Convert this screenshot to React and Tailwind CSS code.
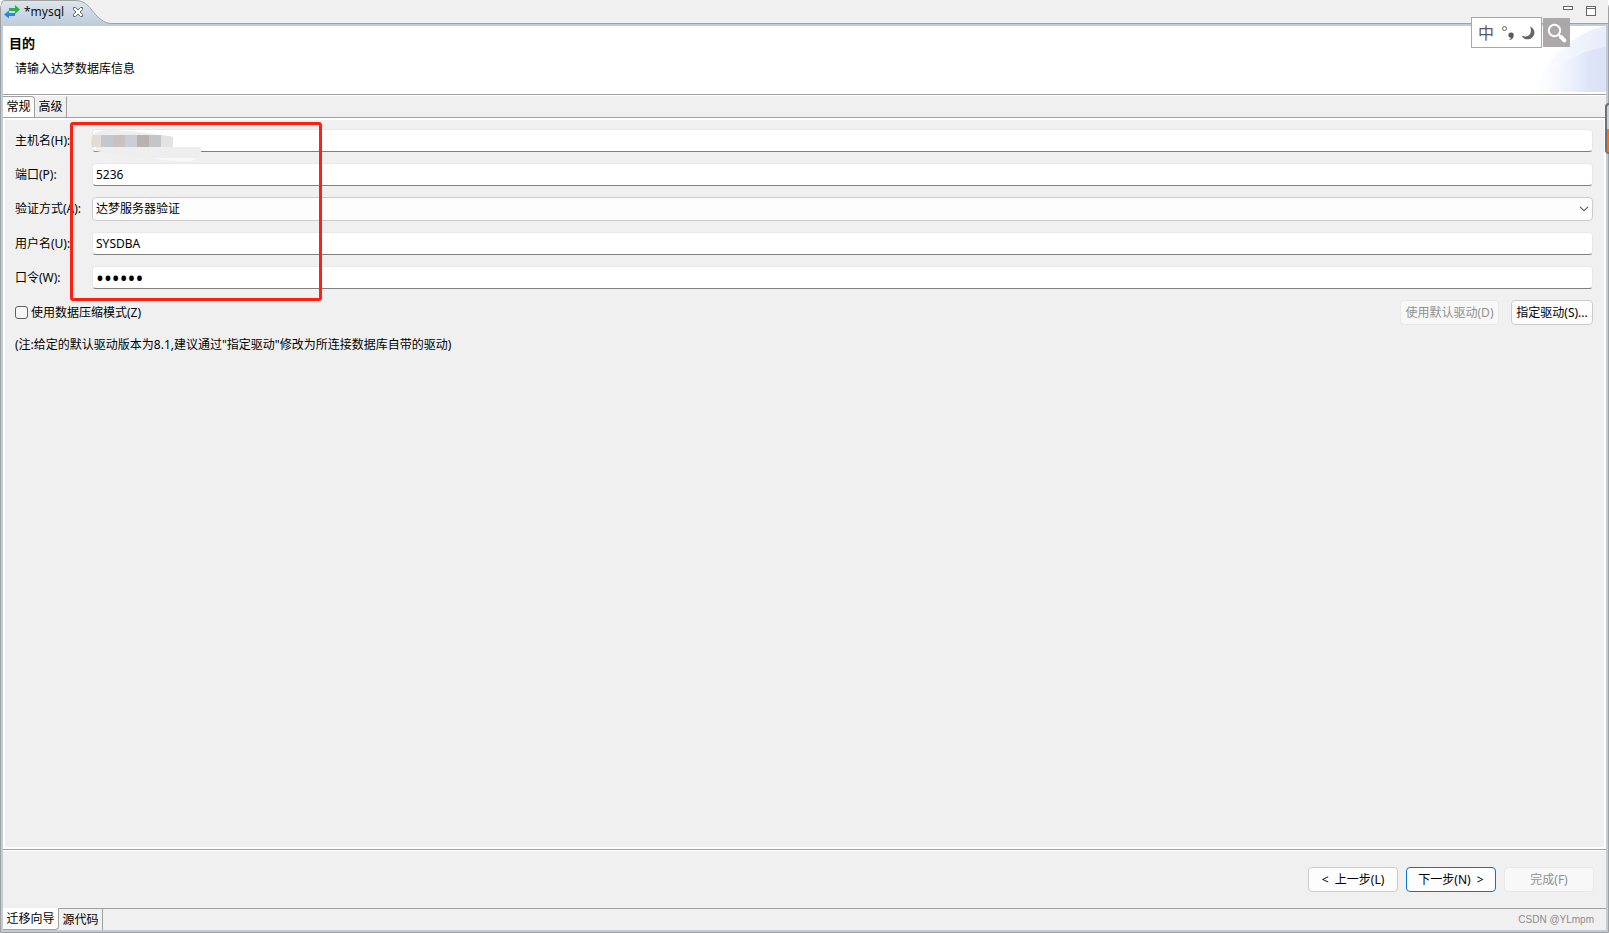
import React, { useState } from "react";

const FONT = "font-['Noto_Sans','Noto_Sans_CJK_SC',sans-serif]";

function EditorTabs() {
  return (
    <div className="flex h-[26px] items-start justify-between border-b-2 border-[#bfcddb] bg-[#f0f0f0]">
      <div className="relative flex h-6 min-w-0 flex-1 items-center gap-1 border-b border-[#a0a0a0] pl-[3px]">
        <svg
          className="absolute left-0 top-0 h-6 w-[116px]"
          viewBox="0 0 116 24"
          fill="none"
          aria-hidden="true"
        >
          <defs>
            <linearGradient id="tabFill" x1="0" y1="0" x2="0" y2="1">
              <stop offset="0" stopColor="#dde5ee" />
              <stop offset="1" stopColor="#bfcddb" />
            </linearGradient>
          </defs>
          <path
            d="M0 24V4Q0 .5 4 .5H74C86 .5 89 9 95 15C100 20 104 23.5 111 23.5V24Z"
            fill="url(#tabFill)"
          />
          <path
            d="M0 5Q0 .5 5 .5H74C86 .5 89 9 95 15C100 20 104 23.5 111 23.5H116"
            stroke="#a0a0a0"
          />
        </svg>
        <svg className="relative h-4 w-4" viewBox="0 0 16 16" aria-hidden="true">
          <path d="M5 4H11V1L16 5.500L11 10V7H5Z" fill="#2fae49" />
          <path d="M11 9H5V6.500L0 10.500L5 14.500V12H11Z" fill="#2e86d8" />
        </svg>
        <span className="relative text-xs leading-4 text-[#111]">*mysql</span>
        <button type="button" aria-label="关闭" className="relative ml-1 h-3 w-3">
          <svg viewBox="0 0 12 12" className="h-3 w-3" aria-hidden="true">
            <path
              d="M1.500 1.500H3.500L6 4L8.500 1.500H10.500V3.500L8 6L10.500 8.500V10.500H8.500L6 8L3.500 10.500H1.500V8.500L4 6L1.500 3.500Z"
              fill="#fff"
              stroke="#666"
            />
          </svg>
        </button>
      </div>
      <div className="flex h-6 gap-[13px] border-b border-[#a0a0a0] pr-3 pt-[6px]">
        <button type="button" aria-label="最小化" className="h-[10px] w-[10px]">
          <svg viewBox="0 0 10 10" className="h-[10px] w-[10px]" aria-hidden="true">
            <rect x=".5" y=".5" width="9" height="3" fill="#fff" stroke="#666" />
          </svg>
        </button>
        <button type="button" aria-label="最大化" className="h-[10px] w-[10px]">
          <svg viewBox="0 0 10 10" className="h-[10px] w-[10px]" aria-hidden="true">
            <rect x=".5" y=".5" width="9" height="9" fill="#fff" stroke="#666" />
            <path d="M0 2.500H10" stroke="#666" />
          </svg>
        </button>
      </div>
    </div>
  );
}

function Banner() {
  return (
    <header className="relative h-[69px] border-b border-[#a0a0a0] bg-white pt-2">
      <svg
        className="absolute right-0 top-0 h-[66px] w-[73px]"
        viewBox="0 0 73 66"
        aria-hidden="true"
      >
        <defs>
          <linearGradient id="arcOuter" x1="0" x2="1">
            <stop offset="0" stopColor="#fff" />
            <stop offset="1" stopColor="#e6ecfa" />
          </linearGradient>
          <linearGradient id="arcInner" x1="0" x2="1">
            <stop offset="0" stopColor="#fff" stopOpacity="0" />
            <stop offset=".75" stopColor="#dde4f7" />
            <stop offset="1" stopColor="#dbe2f6" />
          </linearGradient>
        </defs>
        <path d="M0 66C12 36 38 6 73 0V66Z" fill="url(#arcOuter)" />
        <path d="M6 66C20 40 44 25 73 21V66Z" fill="url(#arcInner)" />
      </svg>
      <h1 className="relative pl-[6px] text-[13px] font-bold leading-[18px] text-black">目的</h1>
      <p className="relative mt-2 pl-3 text-xs leading-[18px] text-black">
        请输入达梦数据库信息
      </p>
    </header>
  );
}

function InputMethodBar() {
  return (
    <div className="absolute right-[38px] top-4 flex h-[31px] items-center gap-px">
      <div className="flex h-[31px] w-[71px] items-center justify-between border border-[#a8a8a8] bg-white px-[6px]">
        <span className="text-base leading-5 text-[#5a5a5a]">中</span>
        <svg viewBox="0 0 14 16" className="h-4 w-[14px]" aria-hidden="true">
          <circle cx="3.500" cy="3.500" r="2" fill="none" stroke="#666" strokeWidth="1" />
          <path d="M10 7.500A2.700 2.700 0 0 1 12.700 10.500C12.700 13 11 14.500 8.500 15L8.300 14.200C9.500 13.800 10 13.300 10 12.700A2.600 2.600 0 0 1 10 7.500Z" fill="#5a5a5a" />
        </svg>
        <svg viewBox="0 0 14 14" className="h-[14px] w-[14px]" aria-hidden="true">
          <path d="M9 .5C14 2 15 8.500 11 11.800C7.500 14.500 2 13.500 .5 9.500C4 11.500 8 10.500 9.300 7.500C10.300 5 10 2.500 9 .5Z" fill="#666" />
        </svg>
      </div>
      <button
        type="button"
        aria-label="搜索"
        className="flex h-[29px] w-[27px] items-center justify-center bg-[#aaa8a9]"
      >
        <svg viewBox="0 0 20 20" className="h-5 w-5" fill="none" aria-hidden="true">
          <circle cx="7.500" cy="7.500" r="5.700" stroke="#fff" strokeWidth="2" />
          <path d="M11.500 11.500L14 14" stroke="#fff" strokeWidth="2" />
          <path d="M14 14L17.300 17.300" stroke="#fff" strokeWidth="4" strokeLinecap="round" />
        </svg>
      </button>
    </div>
  );
}

function SideHandle() {
  return (
    <div
      className="absolute -right-px top-[102px] flex h-[51px] w-1 flex-col rounded-l border-y-2 border-l-2 border-[#707070] bg-[#c8d0da]"
      aria-hidden="true"
    >
      <div className="mt-6 flex-1 bg-[#f97316]" />
    </div>
  );
}

function Field({ id, label, children }) {
  return (
    <div className="flex items-center">
      <label htmlFor={id} className="w-[77px] shrink-0 whitespace-nowrap leading-[18px]">
        {label}
      </label>
      {children}
    </div>
  );
}

const INPUT =
  "h-[23px] min-w-0 flex-1 rounded-sm border border-b-[#808080] border-l-[#e8e8e8] border-r-[#e8e8e8] border-t-[#e8e8e8] bg-white px-[3px] text-black outline-none";

function RedactedHost() {
  return (
    <svg
      className="absolute left-[86px] top-[10px] h-[32px] w-[112px]"
      viewBox="0 0 112 32"
      aria-hidden="true"
    >
      <path d="M2 4Q8 0 20 0Q60 2 82 8V17H110V24Q106 32 95 31Q76 32 66 28Q36 28 5 21V16H2Z" fill="#eeeeee" />
      <path d="M64 28H106Q102 32 95 31Q76 32 64 28Z" fill="#f8f8f8" />
      <path d="M2 5H10V17H1Q-1 10 2 5Z" fill="#e2dcd6" />
      <rect x="10" y="5" width="12" height="12" fill="#c2c8cd" />
      <rect x="22" y="5" width="12" height="12" fill="#c9c2c0" />
      <rect x="34" y="5" width="12" height="12" fill="#cacdd3" />
      <rect x="46" y="5" width="12" height="12" fill="#b7b2b0" />
      <rect x="58" y="5" width="12" height="12" fill="#c4c4c9" />
      <path d="M70 5Q79 6 82 7V17H70Z" fill="#e3e3e3" />
    </svg>
  );
}

function ConnectionForm() {
  const [port, setPort] = useState("5236");
  const [user, setUser] = useState("SYSDBA");
  const [password, setPassword] = useState("dameng");
  return (
    <main className="relative flex-1 border-2 border-white bg-[#f0f0f0] pl-[10px] pr-[11px] pt-[9px]">
      <form className="flex flex-col gap-[11px]" onSubmit={(e) => e.preventDefault()}>
        <Field id="host" label="主机名(H):">
          <input id="host" type="text" className={`${INPUT} text-xs`} />
        </Field>
        <Field id="port" label="端口(P):">
          <input
            id="port"
            type="text"
            className={`${INPUT} text-xs`}
            value={port}
            onChange={(e) => setPort(e.target.value)}
          />
        </Field>
        <Field id="auth" label="验证方式(A):">
          <div className="relative flex min-w-0 flex-1">
            <select
              id="auth"
              className="h-6 w-full appearance-none rounded-sm border border-[#cccccc] bg-[#fdfdfd] px-[3px] text-xs text-black"
            >
              <option>达梦服务器验证</option>
            </select>
            <svg
              className="pointer-events-none absolute right-1 top-[9px] h-[6px] w-[10px]"
              viewBox="0 0 10 6"
              fill="none"
              aria-hidden="true"
            >
              <path d="M1 .8L5 4.800L9 .8" stroke="#555" strokeWidth="1.100" />
            </svg>
          </div>
        </Field>
        <Field id="user" label="用户名(U):">
          <input
            id="user"
            type="text"
            className={`${INPUT} text-xs`}
            value={user}
            onChange={(e) => setUser(e.target.value)}
          />
        </Field>
        <Field id="password" label="口令(W):">
          <input
            id="password"
            type="password"
            className={`${INPUT} text-[21px]`}
            value={password}
            onChange={(e) => setPassword(e.target.value)}
          />
        </Field>
        <div className="flex items-center gap-3">
          <label className="mr-auto flex items-center gap-[3px] leading-[18px]">
            <input
              type="checkbox"
              className="h-[13px] w-[13px] appearance-none rounded-[3px] border border-[#606060] bg-[#f6f6f6] checked:bg-[#0078d4]"
            />
            使用数据压缩模式(Z)
          </label>
          <button
            type="button"
            disabled
            className="h-[25px] w-[99px] whitespace-nowrap rounded border border-[#e8e8e8] bg-[#f8f8f8] text-[#909090]"
          >
            使用默认驱动(D)
          </button>
          <button
            type="button"
            className="h-[25px] w-[82px] whitespace-nowrap rounded border border-[#cccccc] bg-[#fdfdfd] text-black"
          >
            指定驱动(S)...
          </button>
        </div>
        <p className="leading-[18px]">
          (注:给定的默认驱动版本为8.1,建议通过"指定驱动"修改为所连接数据库自带的驱动)
        </p>
      </form>
      <RedactedHost />
      <div className="pointer-events-none absolute left-[65px] top-[2px] h-[179px] w-[252px] rounded-[3px] border-[3px] border-[#ff2012]" />
    </main>
  );
}

function WizardButtons() {
  const base = "h-[25px] w-[90px] whitespace-nowrap rounded border";
  return (
    <div className="flex h-[59px] items-start justify-end gap-2 border-t border-[#a0a0a0] pr-3 pt-[17px] shadow-[inset_0_1px_0_#ffffff]">
      <button type="button" className={`${base} border-[#cccccc] bg-[#fdfdfd]`}>
        &lt;&nbsp; 上一步(L)
      </button>
      <button type="button" className={`${base} border-[#0078d4] bg-[#fdfdfd]`}>
        下一步(N) &nbsp;&gt;
      </button>
      <button type="button" disabled className={`${base} border-[#e8e8e8] bg-[#f8f8f8] text-[#909090]`}>
        完成(F)
      </button>
    </div>
  );
}

export default function App() {
  return (
    <div
      className={`relative flex min-h-screen flex-col rounded-t-lg border border-[#a0a0a0] bg-[#f0f0f0] text-xs text-black ${FONT}`}
    >
      <div className="-mt-px">
        <EditorTabs />
      </div>
      <div className="flex flex-1 flex-col border-x-2 border-b-2 border-[#bfcddb]">
        <Banner />
        <nav className="flex h-[23px] items-end border-b border-[#a0a0a0] shadow-[inset_0_1px_0_#ffffff]">
          <button
            type="button"
            className="h-[21px] w-8 rounded-tr-sm border-r border-t border-[#a0a0a0] bg-white"
          >
            常规
          </button>
          <button
            type="button"
            className="h-[21px] w-8 border-r border-t border-r-[#a0a0a0] border-t-transparent"
          >
            高级
          </button>
        </nav>
        <ConnectionForm />
        <WizardButtons />
        <footer className="flex h-[22px] items-start justify-between">
          <nav className="flex">
            <button
              type="button"
              className="h-[22px] w-[56px] rounded-br-sm border-b border-r border-[#a0a0a0] bg-white"
            >
              迁移向导
            </button>
            <button type="button" className="h-[22px] w-11 border-r border-t border-[#a0a0a0]">
              源代码
            </button>
          </nav>
          <div className="flex h-[22px] flex-1 items-center justify-end border-t border-[#a0a0a0] pr-3">
            <span className="font-['Liberation_Sans',sans-serif] text-[10px] leading-4 text-[#8c8c8c]">
              CSDN @YLmpm
            </span>
          </div>
        </footer>
      </div>
      <InputMethodBar />
      <SideHandle />
    </div>
  );
}
